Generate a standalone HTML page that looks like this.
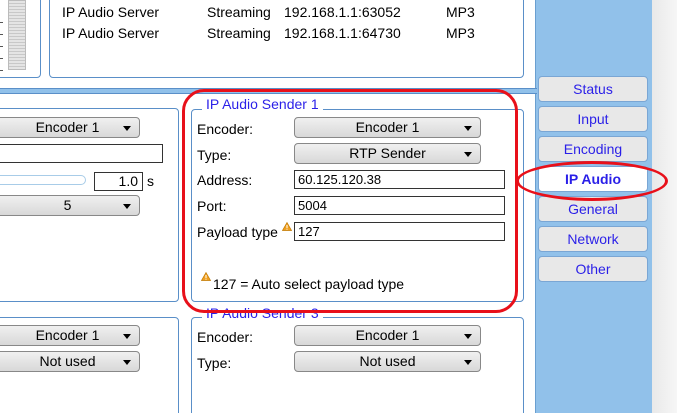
<!DOCTYPE html>
<html><head><style>
*{box-sizing:border-box;margin:0;padding:0}
html,body{width:677px;height:413px;overflow:hidden}
body{position:relative;background:#fff;font-family:"Liberation Sans",sans-serif;font-size:14px;color:#000}
.a{position:absolute}
.box{position:absolute;border:1px solid #5a8fc8;border-radius:4px;background:#fff}
.sel{position:absolute;height:21px;border:1px solid #888;border-radius:4px;background:linear-gradient(#f0f0f0,#d8d8d8);text-align:center;line-height:19px;font-size:14px}
.sel:after{content:"";position:absolute;right:8px;top:8px;border-left:4px solid transparent;border-right:4px solid transparent;border-top:5px solid #000}
.inp{position:absolute;height:19px;border:1px solid #333;background:#fff;font-size:13px;line-height:17px;padding-left:3px}
.leg{position:absolute;background:#fff;color:#2a1fe8;padding:0 4px;font-size:14px;line-height:16px}
.nav{position:absolute;left:538px;width:110px;height:26px;border:1px solid #7aa6d4;border-radius:4px;background:#e8e8e8;color:#2a1fe8;text-align:center;line-height:24px;font-size:14px}
.lbl{position:absolute;font-size:14px}
</style></head><body>
<div class="a" style="left:652px;top:0;width:25px;height:413px;background:linear-gradient(90deg,#e9e9e9,#f6f6f6)"></div>
<div class="a" style="left:535px;top:0;width:117px;height:413px;background:#91c1ea;border-left:1px solid #6a9fd0"></div>
<div class="a" style="left:0;top:88px;width:537px;height:6px;background:#91c1ea;border-top:1px solid #5a8fc8;border-bottom:1px solid #5a8fc8"></div>
<div class="box" style="left:-5px;top:-5px;width:46px;height:83px"></div>
<div class="a" style="left:8px;top:0;width:18px;height:70px;border:1px solid #bbb;background:repeating-linear-gradient(#e4e4e4 0 2px,#c8c8c8 2px 3px)"></div>
<div class="a" style="left:0;top:12px;width:3px;height:60px;background:repeating-linear-gradient(transparent 0 10px,#555 10px 11px,transparent 11px 12px)"></div>
<div class="box" style="left:49px;top:-5px;width:475px;height:83px"></div>
<div class="lbl" style="left:62px;top:4px">IP Audio Server</div>
<div class="lbl" style="left:207px;top:4px">Streaming</div>
<div class="lbl" style="left:284px;top:4px">192.168.1.1:63052</div>
<div class="lbl" style="left:446px;top:4px">MP3</div>
<div class="lbl" style="left:62px;top:25px">IP Audio Server</div>
<div class="lbl" style="left:207px;top:25px">Streaming</div>
<div class="lbl" style="left:284px;top:25px">192.168.1.1:64730</div>
<div class="lbl" style="left:446px;top:25px">MP3</div>
<div class="box" style="left:-5px;top:108px;width:184px;height:194px"></div>
<div class="sel" style="left:-5px;top:117px;width:145px">Encoder 1</div>
<div class="inp" style="left:-5px;top:144px;width:168px"></div>
<div class="a" style="left:-5px;top:175px;width:91px;height:10px;border:1px solid #a8cce8;border-radius:5px"></div>
<div class="inp" style="left:94px;top:172px;width:49px;text-align:right;padding-right:4px;font-size:14px">1.0</div>
<div class="lbl" style="left:147px;top:173px">s</div>
<div class="sel" style="left:-5px;top:195px;width:145px">5</div>
<div class="box" style="left:-5px;top:317px;width:184px;height:110px"></div>
<div class="sel" style="left:-5px;top:325px;width:145px">Encoder 1</div>
<div class="sel" style="left:-5px;top:351px;width:145px">Not used</div>
<div class="box" style="left:191px;top:109px;width:333px;height:193px"></div>
<div class="leg" style="left:202px;top:96px">IP Audio Sender 1</div>
<div class="lbl" style="left:197px;top:121px">Encoder:</div>
<div class="sel" style="left:294px;top:117px;width:187px">Encoder 1</div>
<div class="lbl" style="left:197px;top:147px">Type:</div>
<div class="sel" style="left:294px;top:143px;width:187px">RTP Sender</div>
<div class="lbl" style="left:197px;top:172px">Address:</div>
<div class="inp" style="left:294px;top:170px;width:211px">60.125.120.38</div>
<div class="lbl" style="left:197px;top:198px">Port:</div>
<div class="inp" style="left:294px;top:196px;width:211px">5004</div>
<div class="lbl" style="left:197px;top:224px">Payload type</div>
<svg class="a" style="left:282px;top:222px" width="10" height="9"><path d="M5 0.5L9.5 8.5H0.5Z" fill="#f0a020" stroke="#c07800" stroke-width="0.7"/><rect x="4.5" y="3" width="1" height="3" fill="#fff"/><rect x="4.5" y="6.7" width="1" height="1" fill="#fff"/></svg>
<div class="inp" style="left:294px;top:222px;width:211px">127</div>
<svg class="a" style="left:201px;top:272px" width="10" height="9"><path d="M5 0.5L9.5 8.5H0.5Z" fill="#f0a020" stroke="#c07800" stroke-width="0.7"/><rect x="4.5" y="3" width="1" height="3" fill="#fff"/><rect x="4.5" y="6.7" width="1" height="1" fill="#fff"/></svg>
<div class="lbl" style="left:213px;top:276px">127 = Auto select payload type</div>
<div class="box" style="left:191px;top:317px;width:333px;height:110px"></div>
<div class="leg" style="left:202px;top:305px">IP Audio Sender 3</div>
<div class="lbl" style="left:197px;top:329px">Encoder:</div>
<div class="sel" style="left:294px;top:325px;width:187px">Encoder 1</div>
<div class="lbl" style="left:197px;top:355px">Type:</div>
<div class="sel" style="left:294px;top:351px;width:187px">Not used</div>
<div class="nav" style="top:76px">Status</div>
<div class="nav" style="top:106px">Input</div>
<div class="nav" style="top:136px">Encoding</div>
<div class="nav" style="top:166px;background:#fff;font-weight:bold">IP Audio</div>
<div class="nav" style="top:196px">General</div>
<div class="nav" style="top:226px">Network</div>
<div class="nav" style="top:256px">Other</div>
<div class="a" style="left:182px;top:89px;width:336px;height:224px;border:3px solid #e8101a;border-radius:22px"></div>
<div class="a" style="left:516px;top:161px;width:152px;height:40px;border:3px solid #e8101a;border-radius:50%"></div>
</body></html>
